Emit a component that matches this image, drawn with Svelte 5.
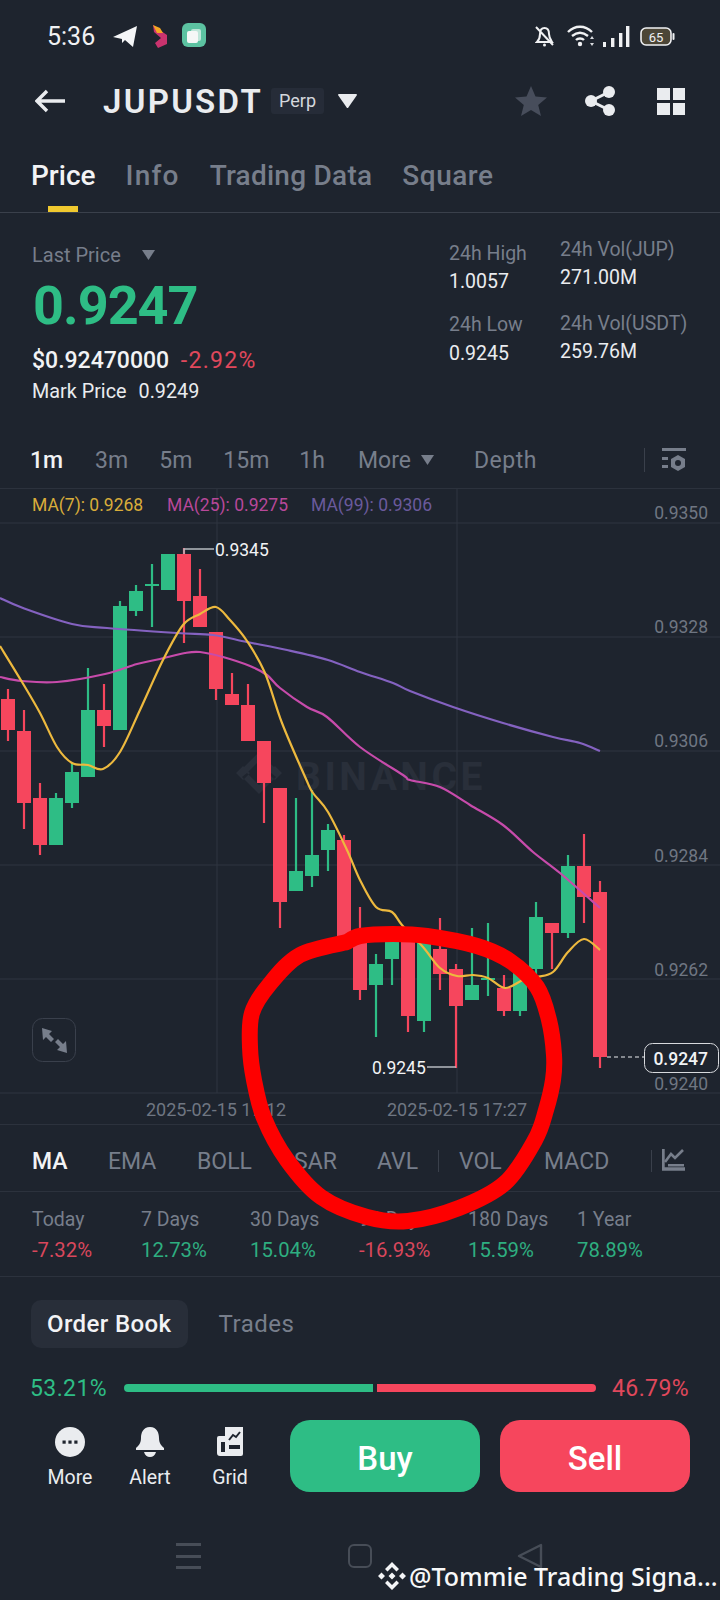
<script>
  // [center x, body top, body bottom, wick top, wick bottom, up?]
  const candles = [
    [8, 699, 730, 689, 741, 0], [24, 731, 803, 710, 829, 0], [40, 798, 845, 783, 855, 0],
    [56, 798, 845, 793, 845, 1], [72, 772, 803, 763, 808, 1], [88, 710, 777, 668, 777, 1],
    [104, 710, 726, 684, 747, 0], [120, 606, 730, 601, 730, 1], [136, 591, 611, 585, 616, 1],
    [152, 584, 586, 564, 627, 1], [168, 554, 590, 554, 590, 1], [184, 554, 601, 548, 643, 0],
    [200, 596, 627, 569, 627, 0], [216, 632, 689, 632, 700, 0], [232, 694, 705, 673, 705, 0],
    [248, 705, 741, 684, 741, 0], [264, 741, 783, 741, 823, 0], [280, 788, 902, 788, 928, 0],
    [296, 871, 891, 798, 891, 1], [312, 855, 876, 790, 887, 1], [328, 830, 850, 824, 871, 1],
    [344, 840, 937, 835, 948, 0], [360, 935, 990, 907, 1000, 0], [376, 964, 985, 954, 1037, 1],
    [392, 940, 959, 940, 985, 1], [408, 940, 1016, 940, 1032, 0], [424, 943, 1021, 943, 1032, 1],
    [440, 949, 974, 918, 990, 0], [456, 969, 1006, 964, 1068, 0], [472, 985, 1000, 928, 1000, 1],
    [488, 978, 980, 923, 996, 1], [504, 988, 1011, 975, 1016, 0], [520, 973, 1011, 960, 1016, 1],
    [536, 917, 969, 902, 977, 1], [552, 923, 933, 923, 969, 0], [568, 866, 933, 855, 938, 1],
    [584, 866, 897, 834, 923, 0], [600, 892, 1057, 881, 1068, 0]
  ];

  const ma99 = [[0,598],[23,608],[72,624],[107,628],[177,633],[213,635],[247,642],[287,650],[328,660],[360,672],[393,683],[410,691],[453,707],[503,723],[553,737],[580,743],[600,751]];
  const ma25 = [[0,677],[22,681],[57,682],[105,674],[137,664],[160,659],[185,653],[200,652],[223,657],[250,666],[267,675],[280,688],[307,707],[327,717],[360,747],[403,775],[410,780],[440,787],[470,805],[503,825],[533,852],[560,873],[600,908]];
  const ma7 = [[0,646],[22,682],[40,713],[57,747],[72,763],[88,765],[103,769],[120,752],[140,710],[163,660],[183,625],[200,614],[216,607],[230,620],[247,641],[265,673],[282,723],[306,779],[313,793],[328,812],[347,850],[360,880],[376,907],[392,912],[402,925],[423,947],[440,968],[457,976],[473,975],[488,978],[505,988],[523,980],[537,977],[553,972],[568,952],[584,939],[600,950]];

  const ring = [[347,942],[300,955],[269,985],[252,1013],[250,1047],[254,1080],[264,1118],[287,1160],[321,1197],[367,1217],[408,1221],[459,1208],[505,1183],[535,1140],[546,1110],[553,1080],[554,1055],[549,1020],[537,987],[510,961],[477,946],[427,936],[393,934],[360,936],[347,942]];

  // catmull-rom through the hand-drawn points
  function smooth(pts) {
    let d = `M${pts[0][0]} ${pts[0][1]}`;
    for (let i = 0; i < pts.length - 1; i++) {
      const a = pts[Math.max(i - 1, 0)], b = pts[i], c = pts[i + 1], e = pts[Math.min(i + 2, pts.length - 1)];
      d += ` C${b[0] + (c[0] - a[0]) / 6} ${b[1] + (c[1] - a[1]) / 6} ${c[0] - (e[0] - b[0]) / 6} ${c[1] - (e[1] - b[1]) / 6} ${c[0]} ${c[1]}`;
    }
    return d;
  }

  const hLines = [523, 637, 751, 865, 979, 1093];
  const axis = [['0.9350', 513], ['0.9328', 627], ['0.9306', 741], ['0.9284', 856], ['0.9262', 970], ['0.9240', 1084]];

  const periods = [
    ['Today', '-7.32%', 0], ['7 Days', '12.73%', 1], ['30 Days', '15.04%', 1],
    ['90 Days', '-16.93%', 0], ['180 Days', '15.59%', 1], ['1 Year', '78.89%', 1]
  ];
</script>

<div class="page">
  <div class="status">
    <span class="time">5:36</span>
    <svg class="st-left" width="100" height="26" viewBox="0 0 100 26">
      <path d="M0 14 L24 3 L20 24 L12 17 L9 20 L9 16 Z" fill="#f4f5f7" />
      <path d="M40 2 L48 8 L54 12 L54 21 L45 25 L42 20 L48 15 L41 9 Z" fill="#c9336e" />
      <path d="M40 2 L47 5 L50 10 L44 10 Z" fill="#f5a623" />
      <rect x="69" y="0" width="24" height="24" rx="6" fill="#5cc2a1" />
      <rect x="78" y="6" width="10" height="12" rx="2" fill="#bfe6d9" />
      <rect x="74" y="8" width="11" height="12" rx="2" fill="#f5f7f6" />
    </svg>
    <svg class="st-right" width="140" height="24" viewBox="0 0 140 24">
      <path d="M2 18 C5 15 5 12 5 10 C5 6 7 4 9.5 4 C12 4 14 6 14 10 C14 13 15 15 17 18 Z M1 3 L18 21" fill="none" stroke="#f0f1f3" stroke-width="2" />
      <circle cx="9.5" cy="21" r="1.5" fill="#f0f1f3" />
      <path d="M33 8 C40 1 50 1 57 8 M37 12 C42 8 48 8 53 12 M41 16 C43 14 47 14 49 16" fill="none" stroke="#f0f1f3" stroke-width="2.4" />
      <circle cx="45" cy="20" r="2.2" fill="#f0f1f3" />
      <path d="M55 15 l2 -3 l2 3 Z M55 19 l2 3 l2 -3 Z" fill="#d8dade" />
      <g fill="#f0f1f3">
        <rect x="68" y="18" width="3" height="5" /><rect x="76" y="14" width="3.4" height="9" />
        <rect x="84" y="9" width="3.4" height="14" /><rect x="91" y="2" width="3.4" height="21" />
      </g>
      <rect x="106" y="4" width="30" height="17" rx="5" fill="#4c4637" stroke="#f0f1f3" stroke-width="1.6" />
      <rect x="137.500" y="9" width="2" height="7" rx="1" fill="#f0f1f3" />
      <text x="121" y="17.500" class="batt">65</text>
    </svg>
  </div>

  <div class="header">
    <svg class="back" width="30" height="24" viewBox="0 0 30 24"><path d="M30 12 H3 M12 2 L2 12 L12 22" fill="none" stroke="#eaecef" stroke-width="3.4" /></svg>
    <span class="pair">JUPUSDT</span>
    <span class="perp">Perp</span>
    <svg class="caret" width="19" height="14" viewBox="0 0 19 14"><path d="M0 1 Q0 0 1 0 H18 Q19 0 19 1 L10 14 H9 Z" fill="#eaecef" /></svg>
    <svg class="star" width="32" height="30" viewBox="0 0 32 30"><path d="M16 0 L20.500 10.500 L32 11.500 L23.200 19 L26 30 L16 24 L6 30 L8.800 19 L0 11.500 L11.500 10.500 Z" fill="#474d5b" /></svg>
    <svg class="share" width="30" height="30" viewBox="0 0 30 30">
      <circle cx="24" cy="6" r="6" fill="#eaecef" /><circle cx="6" cy="15" r="6" fill="#eaecef" /><circle cx="24" cy="24" r="6" fill="#eaecef" />
      <path d="M24 6 L6 15 L24 24" fill="none" stroke="#eaecef" stroke-width="3" />
    </svg>
    <div class="grid4"><i></i><i></i><i></i><i></i></div>
  </div>

  <div class="tabs">
    <div class="tab on">Price<b></b></div>
    <div class="tab info">Info</div>
    <div class="tab wide">Trading Data</div>
    <div class="tab wide2">Square</div>
  </div>

  <div class="stats">
    <div class="left">
      <div class="last">Last Price <svg width="13" height="10" viewBox="0 0 13 10"><path d="M0 0 H13 L6.500 10 Z" fill="#777e8b" /></svg></div>
      <div class="price">0.9247</div>
      <div class="usd">$0.92470000 <span class="neg">-2.92%</span></div>
      <div class="mark"><span>Mark Price</span><span>0.9249</span></div>
    </div>
    <div class="cell c1">
      <div class="k">24h High</div><div class="v">1.0057</div>
      <div class="k second">24h Low</div><div class="v low">0.9245</div>
    </div>
    <div class="cell c2">
      <div class="k">24h Vol(JUP)</div><div class="v">271.00M</div>
      <div class="k second">24h Vol(USDT)</div><div class="v">259.76M</div>
    </div>
  </div>

  <div class="intervals">
    <span class="on first">1m</span><span>3m</span><span>5m</span><span class="m15">15m</span><span class="h1">1h</span>
    <span class="more">More <svg width="13" height="10" viewBox="0 0 13 10"><path d="M0 0 H13 L6.500 10 Z" fill="#777e8b" /></svg></span>
    <span class="depth">Depth</span>
    <em></em>
    <svg width="26" height="24" viewBox="0 0 26 24">
      <rect x="1" y="0" width="24" height="3" fill="#777e8b" />
      <rect x="1" y="9" width="6" height="3" fill="#777e8b" />
      <rect x="1" y="17" width="6" height="3" fill="#777e8b" />
      <path d="M17 7 L24 11 V19 L17 23 L10 19 V11 Z" fill="#777e8b" />
      <circle cx="17" cy="15" r="3" fill="#1e242e" />
    </svg>
  </div>

  <div class="chart">
    <svg class="plot" width="720" height="635" viewBox="0 489 720 635">
      {#each hLines as y}<line x1="0" x2="720" y1={y} y2={y} class="gl" />{/each}
      <line x1="217" x2="217" y1="489" y2="1093" class="gl" />
      <line x1="457" x2="457" y1="489" y2="1093" class="gl" />

      <g class="wm">
        <path d="M236 773 L243 766 L250 773 L243 780 Z M268 773 L275 766 L282 773 L275 780 Z M259 752 L276 769 L271 773 L259 761 L247 773 L242 769 Z M259 794 L276 777 L271 773 L259 785 L247 773 L242 777 Z" />
        <text x="296" y="790" class="wmt">BINANCE</text>
      </g>

      <text x="32" y="511" class="leg y">MA(7): 0.9268</text>
      <text x="167" y="511" class="leg p">MA(25): 0.9275</text>
      <text x="311" y="511" class="leg v">MA(99): 0.9306</text>

      {#each axis as [t, y]}<text x="708" y={y + 6} class="ax">{t}</text>{/each}

      {#each candles as [x, t, b, wt, wb, up]}
        <rect x={x - 1.1} y={wt} width="2.2" height={wb - wt} fill={up ? '#2ebd85' : '#f6465d'} />
        <rect x={x - 7} y={t} width="14" height={b - t} fill={up ? '#2ebd85' : '#f6465d'} />
      {/each}

      <path d={smooth(ma99)} class="ma" stroke="#8462c0" />
      <path d={smooth(ma25)} class="ma" stroke="#c74bab" />
      <path d={smooth(ma7)} class="ma" stroke="#edb93e" />

      <path d="M184 554 V549 H214" class="tick" />
      <text x="215" y="556" class="hl">0.9345</text>
      <path d="M427 1067 H456" class="tick" />
      <text x="372" y="1074" class="hl">0.9245</text>

      <line x1="607" x2="644" y1="1057" y2="1057" class="dash" />
      <rect x="644.500" y="1043.500" width="74" height="29" rx="8" class="cur" />
      <text x="708" y="1065" class="curt">0.9247</text>

      <text x="146" y="1116" class="tm">2025-02-15 17:12</text>
      <text x="387" y="1116" class="tm">2025-02-15 17:27</text>

      <rect x="32.500" y="1018.500" width="43" height="43" rx="10" class="xp" />
      <path d="M42 1028 L52 1031 L49 1034 L54 1039 L51 1042 L46 1037 L43 1040 Z M67 1053 L57 1050 L60 1047 L55 1042 L58 1039 L63 1044 L66 1041 Z" fill="#777e8b" />
    </svg>
  </div>

  <div class="inds">
    <span class="on w1">MA</span>
    <span class="w2">EMA</span>
    <span class="w3">BOLL</span>
    <span class="w4">SAR</span>
    <span class="w5">AVL</span>
    <em class="w6"></em>
    <span class="w7">VOL</span>
    <span class="w8">MACD</span>
    <em class="w9"></em>
    <svg width="24" height="24" viewBox="0 0 24 24">
      <path d="M1 0 V20 H23" fill="none" stroke="#777e8b" stroke-width="3.4" />
      <path d="M3 13 L9 5 L13 9 L21 1" fill="none" stroke="#777e8b" stroke-width="2.6" />
      <rect x="6" y="15" width="16" height="2.500" fill="#777e8b" />
    </svg>
  </div>

  <div class="periods">
    {#each periods as [k, v, up]}
      <div><div class="pk">{k}</div><div class="pv" class:up>{v}</div></div>
    {/each}
  </div>

  <div class="book">
    <span class="pill">Order Book</span>
    <span class="trades">Trades</span>
  </div>

  <div class="ratio">
    <span class="gr">53.21%</span>
    <div class="bar"><i class="b1"></i><i class="b2"></i></div>
    <span class="rd">46.79%</span>
  </div>

  <div class="actions">
    <div class="act a1">
      <svg width="30" height="30" viewBox="0 0 30 30"><circle cx="15" cy="15" r="15" fill="#eaecef" /><rect x="7.500" y="13.500" width="3.200" height="3.200" fill="#1e242e" /><rect x="13.400" y="13.500" width="3.200" height="3.200" fill="#1e242e" /><rect x="19.300" y="13.500" width="3.200" height="3.200" fill="#1e242e" /></svg>
      More
    </div>
    <div class="act a2">
      <svg width="28" height="30" viewBox="0 0 28 30"><path d="M14 0 C21 0 23 6 23 11 C23 17 26 19 28 21 V23 H0 V21 C2 19 5 17 5 11 C5 6 7 0 14 0 Z M8 25 H20 C19 28.500 17 30 14 30 C11 30 9 28.500 8 25 Z" fill="#eaecef" /></svg>
      Alert
    </div>
    <div class="act a3">
      <svg width="28" height="30" viewBox="0 0 28 30">
        <path d="M9 0 H27 V27 Q27 29 25 29 H4 Q1 29 1 26 V11 Q1 9 3 9 H9 Z" fill="#eaecef" />
        <rect x="5" y="15" width="4" height="10" fill="#1e242e" /><rect x="13" y="18" width="11" height="4" fill="#1e242e" />
        <path d="M13 13 L17 8 L20 10 L24 5" fill="none" stroke="#1e242e" stroke-width="2" />
      </svg>
      Grid
    </div>
    <button class="buy">Buy</button>
    <button class="sell">Sell</button>
  </div>

  <div class="nav">
    <div class="burger"><i></i><i></i><i></i></div>
    <div class="sq"></div>
    <svg width="26" height="26" viewBox="0 0 26 26"><path d="M24 2 V24 L2 13 Z" fill="none" stroke="#474d57" stroke-width="2.400" stroke-linejoin="round" /></svg>
  </div>

  <div class="credit">
    <svg width="28" height="28" viewBox="0 0 28 28"><path d="M0 14 L3.500 10.500 L7 14 L3.500 17.500 Z M21 14 L24.500 10.500 L28 14 L24.500 17.500 Z M14 0 L21 7 L18.500 9.500 L14 5 L9.500 9.500 L7 7 Z M14 28 L21 21 L18.500 18.500 L14 23 L9.500 18.500 L7 21 Z M14 10.500 L17.500 14 L14 17.500 L10.500 14 Z" fill="#f4f5f7" /></svg>
    <span>@Tommie Trading Signa...</span>
  </div>

  <svg class="ring" width="720" height="1600" viewBox="0 0 720 1600">
    <path d={smooth(ring)} fill="none" stroke="#fe0000" stroke-width="16" stroke-linecap="round" stroke-linejoin="round" />
  </svg>
</div>

<style>
  :global(body) {
    margin: 0;
    background: #1e242e;
  }
  .page {
    position: relative;
    width: 720px;
    height: 1600px;
    overflow: hidden;
    background: #1e242e;
    color: #eaecef;
    font-family: Roboto, "Liberation Sans", sans-serif;
  }
  svg {
    display: block;
  }
  .status {
    height: 72px;
    display: flex;
    align-items: center;
    padding-left: 47px;
  }
  .time {
    width: 66px;
    font-size: 25px;
    color: #f0f1f3;
  }
  .st-right {
    margin-left: 322px;
  }
  .batt {
    font-size: 13px;
    font-family: Roboto, sans-serif;
    fill: #f0f1f3;
    text-anchor: middle;
  }
  .header {
    height: 58px;
    display: flex;
    align-items: center;
    padding-left: 35px;
  }
  .pair {
    margin-left: 38px;
    font-size: 33px;
    font-weight: 600;
    letter-spacing: 2.3px;
    width: 168px;
    white-space: nowrap;
  }
  .perp {
    width: 53px;
    height: 26px;
    line-height: 26px;
    text-align: center;
    border-radius: 3px;
    background: #262c38;
    font-size: 18px;
    color: #d5d8dd;
  }
  .caret {
    margin: 0 0 0 14px;
  }
  .star {
    margin-left: 158px;
  }
  .share {
    margin-left: 38px;
  }
  .grid4 {
    margin-left: 42px;
    width: 28px;
    height: 27px;
    display: grid;
    grid-template-columns: 1fr 1fr;
    gap: 3px;
  }
  .grid4 i {
    background: #eaecef;
  }
  .tabs {
    height: 83px;
    box-sizing: border-box;
    display: flex;
    gap: 30px;
    padding: 29px 0 0 31px;
    border-bottom: 1px solid #3a404b;
  }
  .tab {
    position: relative;
    font-size: 28px;
    font-weight: 500;
    color: #777e8b;
  }
  .tab.on {
    color: #f2f3f5;
  }
  .info {
    letter-spacing: 1.2px;
  }
  .wide {
    letter-spacing: 0.25px;
  }
  .wide2 {
    letter-spacing: 0.5px;
  }
  .tab b {
    position: absolute;
    left: 17px;
    width: 30px;
    top: 47px;
    height: 6px;
    background: #f0c92f;
  }
  .stats {
    height: 219px;
    box-sizing: border-box;
    display: flex;
    padding: 28px 0 0 32px;
  }
  .left {
    width: 417px;
  }
  .last {
    display: flex;
    align-items: center;
    gap: 21px;
    font-size: 20px;
    color: #777e8b;
    height: 26px;
    padding-top: 1px;
    margin-bottom: -1px;
  }
  .price {
    margin-top: 9px;
    margin-left: 1px;
    font-size: 54px;
    line-height: 60px;
    font-weight: 700;
    letter-spacing: -1px;
    color: #2ebd85;
  }
  .usd {
    margin-top: 10px;
    font-size: 23px;
    font-weight: 500;
    line-height: 30px;
    color: #f2f3f5;
  }
  .neg {
    margin-left: 6px;
    color: #e0485c;
    font-weight: 400;
    letter-spacing: 1.3px;
  }
  .mark {
    margin-top: 3px;
    display: flex;
    gap: 12px;
    font-size: 19.800px;
    line-height: 26px;
    color: #eaecef;
  }
  .cell {
    font-size: 19.500px;
  }
  .c1 {
    width: 111px;
  }
  .k {
    line-height: 26px;
    color: #777e8b;
    white-space: nowrap;
  }
  .v {
    margin-top: 2px;
    line-height: 26px;
    color: #eaecef;
  }
  .low {
    margin-top: 3px;
  }
  .second {
    margin-top: 17px;
  }
  .c2 {
    margin-top: -4px;
  }
  .c2 .second {
    margin-top: 20px;
  }
  .intervals {
    height: 57px;
    box-sizing: border-box;
    display: flex;
    align-items: center;
    padding-left: 30px;
    font-size: 23px;
    color: #777e8b;
    border-bottom: 1px solid #2c323d;
  }
  .intervals span {
    margin-right: 31px;
  }
  .intervals .first {
    margin-right: 32px;
  }
  .intervals .m15 {
    margin-right: 30px;
  }
  .intervals .h1 {
    margin-right: 33px;
  }
  .intervals .on,
  .inds .on {
    color: #f2f3f5;
    font-weight: 500;
  }
  .more {
    display: flex;
    align-items: center;
    gap: 10px;
    width: 85px;
  }
  .intervals .depth {
    margin-right: 0;
    width: 170px;
    letter-spacing: 0.5px;
  }
  .intervals em {
    width: 1px;
    height: 24px;
    background: #3a404b;
    margin-right: 16px;
  }
  .chart {
    height: 635px;
  }
  .gl {
    stroke: #2f3541;
    stroke-width: 1;
  }
  .wm {
    fill: #292f3a;
  }
  .wmt {
    font-size: 39px;
    font-weight: 700;
    letter-spacing: 3.5px;
  }
  .leg {
    font-size: 17.500px;
  }
  .y {
    fill: #d9ad3a;
  }
  .p {
    fill: #b8489a;
  }
  .v {
    fill: #6a5a9c;
  }
  .ax {
    font-size: 17.500px;
    fill: #6f7682;
    text-anchor: end;
  }
  .ma {
    fill: none;
    stroke-width: 2.2;
    stroke-linejoin: round;
  }
  .tick {
    fill: none;
    stroke: #b7bac0;
    stroke-width: 1.500;
  }
  .hl {
    font-size: 17.500px;
    fill: #f2f3f5;
  }
  .dash {
    stroke: #eaecef;
    stroke-width: 1;
    stroke-dasharray: 4 3;
  }
  .cur {
    fill: #1e242e;
    stroke: #d8dade;
  }
  .curt {
    font-size: 17.500px;
    font-weight: 500;
    fill: #f2f3f5;
    text-anchor: end;
  }
  .tm {
    font-size: 18px;
    fill: #6f7682;
  }
  .xp {
    fill: none;
    stroke: #3a404c;
  }
  .inds {
    height: 68px;
    box-sizing: border-box;
    display: flex;
    align-items: center;
    font-size: 23px;
    color: #777e8b;
    padding: 6px 0 0 32px;
    border-top: 1px solid #2c323d;
    border-bottom: 1px solid #2c323d;
  }
  .inds em {
    width: 1px;
    height: 22px;
    background: #3a404b;
  }
  .inds span {
    flex: none;
  }
  .w1 { width: 76px; }
  .w2 { width: 89px; }
  .w3 { width: 97px; }
  .w4 { width: 83px; }
  .w5 { width: 61px; }
  .w6 { margin-right: 20px; }
  .w7 { width: 85px; }
  .w8 { width: 107px; }
  .w9 { margin-right: 10px; }
  .periods {
    height: 85px;
    box-sizing: border-box;
    display: grid;
    grid-template-columns: repeat(6, 109px);
    padding: 15px 0 0 32px;
    border-bottom: 1px solid #2c323d;
  }
  .pk {
    font-size: 19.500px;
    line-height: 26px;
    color: #777e8b;
    white-space: nowrap;
  }
  .pv {
    font-size: 20.300px;
    margin-top: 4px;
    line-height: 26px;
    color: #d9475c;
  }
  .pv.up {
    color: #2eae80;
  }
  .book {
    height: 91px;
    display: flex;
    align-items: center;
    padding: 2px 0 0 31px;
    font-size: 24px;
    box-sizing: border-box;
  }
  .pill {
    height: 48px;
    line-height: 48px;
    padding: 0 16px;
    border-radius: 10px;
    background: #282e39;
    font-weight: 500;
    letter-spacing: 0.4px;
    color: #f2f3f5;
  }
  .trades {
    margin-left: 31px;
    letter-spacing: 0.5px;
    color: #777e8b;
  }
  .ratio {
    height: 40px;
    display: flex;
    align-items: center;
    padding: 0 31px 0 30px;
    font-size: 23px;
    letter-spacing: 0.4px;
    box-sizing: border-box;
  }
  .gr {
    width: 94px;
    flex: none;
    color: #2ebd85;
  }
  .rd {
    margin-left: 16px;
    flex: none;
    color: #e0485c;
  }
  .bar {
    display: flex;
    flex: none;
    gap: 4px;
    width: 472px;
    height: 8px;
  }
  .b1 {
    width: 249px;
    background: #2ebd85;
    border-radius: 4px 0 0 4px;
  }
  .b2 {
    flex: 1;
    background: #f6465d;
    border-radius: 0 4px 4px 0;
  }
  .actions {
    height: 112px;
    box-sizing: border-box;
    display: flex;
    align-items: flex-start;
    padding-top: 12px;
  }
  .act {
    display: flex;
    flex-direction: column;
    align-items: center;
    width: 80px;
    font-size: 19.500px;
    color: #eaecef;
    margin-top: 7px;
    gap: 9px;
  }
  .a1 { margin-left: 30px; }
  .a3 { margin-right: 20px; }
  button {
    border: 0;
    width: 190px;
    height: 72px;
    padding: 4px 0 0;
    border-radius: 20px;
    color: #fff;
    font: 500 33px Roboto, sans-serif;
  }
  .buy {
    background: #2ebd85;
  }
  .sell {
    margin-left: 20px;
    background: #f6465d;
  }
  .nav {
    display: flex;
    align-items: center;
    padding: 23px 0 0 176px;
  }
  .burger {
    width: 25px;
    display: grid;
    gap: 8.500px;
  }
  .burger i {
    height: 3px;
    background: #474d57;
  }
  .sq {
    box-sizing: border-box;
    width: 24px;
    height: 24px;
    border: 2.400px solid #474d57;
    border-radius: 6px;
    margin: 0 145px 0 147px;
  }
  .credit {
    position: absolute;
    left: 378px;
    top: 1559px;
    display: flex;
    align-items: center;
    gap: 3px;
    font-family: "Noto Sans", sans-serif;
    font-size: 25px;
    font-weight: 500;
    color: #f8f8f8;
    white-space: nowrap;
  }
  .ring {
    position: absolute;
    left: 0;
    top: 0;
    pointer-events: none;
  }
</style>
